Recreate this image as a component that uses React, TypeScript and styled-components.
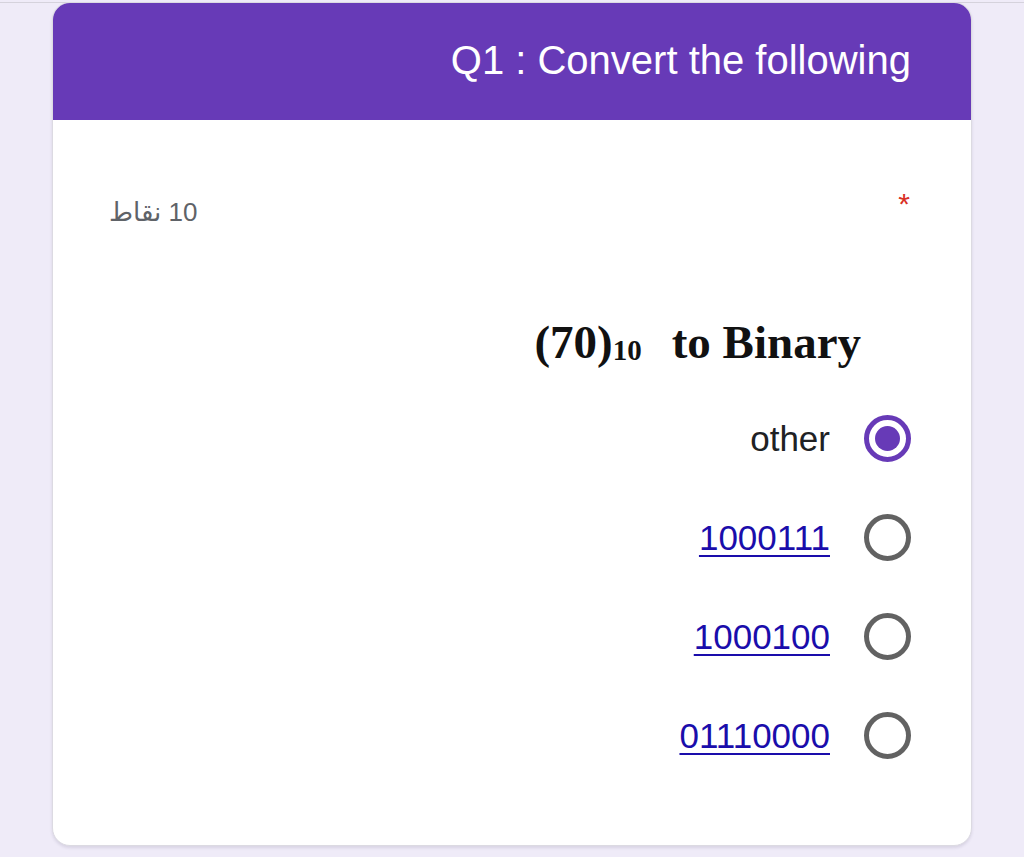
import * as React from 'react';
import styled, { createGlobalStyle } from 'styled-components';

const GlobalStyle = createGlobalStyle`
  html, body {
    margin: 0;
    padding: 0;
    background: #efebf8;
  }
  body {
    font-family: "Liberation Sans", Arial, "DejaVu Sans", sans-serif;
  }
`;

const Page = styled.div`
  min-height: 857px;
  box-sizing: border-box;
  padding-top: 2px;
`;

const TopRule = styled.div`
  height: 1px;
  background: #d5d2dc;
`;

const Card = styled.div`
  direction: rtl;
  width: 920px;
  height: 844px;
  margin: -1px auto 0;
  box-sizing: border-box;
  background: #fff;
  border: 1px solid #dcdae2;
  border-radius: 18px;
  box-shadow: 0 2px 3px rgba(60, 50, 90, 0.12);
  overflow: hidden;
  display: flex;
  flex-direction: column;
`;

const Header = styled.div`
  height: 117px;
  background: #673ab7;
  display: flex;
  align-items: center;
  padding: 0 60px;
  flex-shrink: 0;
`;

const Title = styled.h1`
  margin: -4px 0 0;
  color: #fff;
  font-size: 40px;
  font-weight: 400;
  line-height: 48px;
`;

const Body = styled.div`
  padding: 77px 60px 0;
  display: flex;
  flex-direction: column;
`;

const PointsRow = styled.div`
  display: flex;
  justify-content: space-between;
  align-items: flex-start;
  height: 30px;
`;

const Required = styled.span`
  color: #d93025;
  font-size: 30px;
  line-height: 30px;
  margin-top: -8px;
  margin-right: 1px;
`;

const Points = styled.span`
  color: #5f6368;
  font-size: 26px;
  line-height: 30px;
  margin-left: -4px;
  font-family: "Liberation Sans", "DejaVu Sans", sans-serif;
`;

const Figure = styled.div`
  direction: ltr;
  align-self: flex-start;
  margin-top: 88px;
  margin-right: 50px;
  font-family: "Liberation Serif", "Times New Roman", serif;
  font-weight: 700;
  font-size: 47px;
  line-height: 54px;
  color: #111;
  display: flex;
  align-items: baseline;
`;

const Sub = styled.span`
  font-size: 29px;
  position: relative;
  top: 2px;
  margin-right: 30px;
`;

const Options = styled.div`
  display: flex;
  flex-direction: column;
  gap: 52px;
  margin-top: 40px;
`;

const Option = styled.label`
  display: flex;
  align-items: center;
  gap: 34px;
  height: 47px;
`;

const Radio = styled.span<{ $checked?: boolean }>`
  width: 47px;
  height: 47px;
  box-sizing: border-box;
  border-radius: 50%;
  border: 5px solid ${({ $checked }) => ($checked ? '#673ab7' : '#626262')};
  display: flex;
  align-items: center;
  justify-content: center;
  flex-shrink: 0;
  &::after {
    content: '';
    display: ${({ $checked }) => ($checked ? 'block' : 'none')};
    width: 25px;
    height: 25px;
    border-radius: 50%;
    background: #673ab7;
  }
`;

const OptionText = styled.span<{ $link?: boolean }>`
  font-size: 35px;
  line-height: 40px;
  color: ${({ $link }) => ($link ? '#1a0dab' : '#202124')};
  text-decoration: ${({ $link }) => ($link ? 'underline' : 'none')};
  text-decoration-thickness: 2px;
  text-underline-offset: 5px;
`;

const options = [
  { label: 'other', checked: true, link: false },
  { label: '1000111', checked: false, link: true },
  { label: '1000100', checked: false, link: true },
  { label: '01110000', checked: false, link: true },
];

const App = () => (
  <>
    <GlobalStyle />
    <Page>
      <TopRule />
      <Card>
        <Header>
          <Title dir="ltr">Q1 : Convert the following</Title>
        </Header>
        <Body>
          <PointsRow>
            <Required>*</Required>
            <Points>10 نقاط</Points>
          </PointsRow>
          <Figure>
            (70)<Sub>10</Sub>to Binary
          </Figure>
          <Options>
            {options.map((o) => (
              <Option key={o.label}>
                <Radio $checked={o.checked} />
                <OptionText $link={o.link}>{o.label}</OptionText>
              </Option>
            ))}
          </Options>
        </Body>
      </Card>
    </Page>
  </>
);

export default App;
